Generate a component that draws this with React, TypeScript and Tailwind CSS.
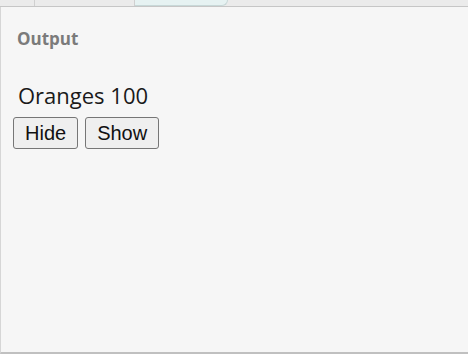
export default function App() {
  return (
    <div className="w-[468px] h-[354px] flex flex-col bg-[#f6f6f6] overflow-hidden">
      <div className="h-[7px] flex bg-[#ebebeb] border-b border-[#c6c6c6] shrink-0">
        <div className="w-[35px] border-r border-[#d0d0d0]" />
        <div className="w-[100px] border-r border-[#d0d0d0]" />
        <div className="w-[93px] bg-[#e6f2f2] border-r border-b border-[#c8d8d8] rounded-br-[6px]" />
      </div>
      <div className="flex-1 flex flex-col border-l border-[#d6d6d6] border-b-2 border-b-[#c0c0c0]">
        <div className="pl-[16px] pt-[21px] text-[17px] font-bold text-[#7b7b7b] leading-[22px] font-['Open_Sans',sans-serif]">
          Output
        </div>
        <div className="pl-[17px] pt-[31px] text-[22px] text-[#1a1a1a] leading-[28px] font-['Open_Sans',sans-serif]">
          Oranges 100
        </div>
        <div className="flex gap-[7px] pl-[12px] pt-[8px]">
          <button className="h-[32px] px-[11px] text-[20px] text-[#111] bg-[#efefef] border border-[#767676] rounded-[3px] font-['Liberation_Sans',Arial,sans-serif]">
            Hide
          </button>
          <button className="h-[32px] px-[11px] text-[20px] text-[#111] bg-[#efefef] border border-[#767676] rounded-[3px] font-['Liberation_Sans',Arial,sans-serif]">
            Show
          </button>
        </div>
      </div>
    </div>
  );
}
